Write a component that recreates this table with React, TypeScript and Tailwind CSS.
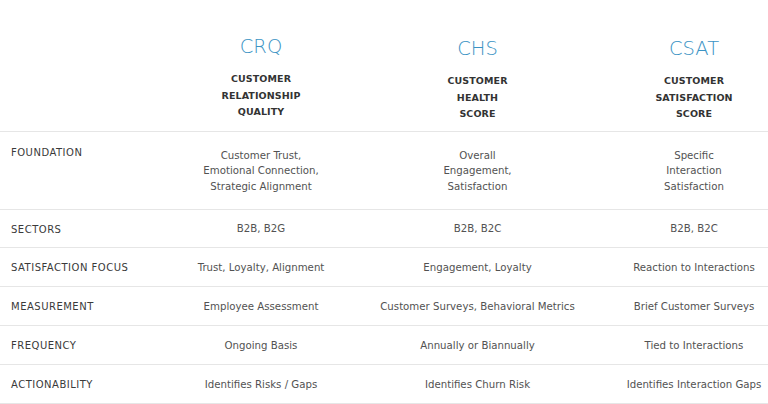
import React from 'react';

type Row = {
  label: string;
  cells: string[][];
  tall?: boolean;
  h: string;
};

const metrics = [
  { code: 'CRQ', pt: 'pt-[35px]', name: ['CUSTOMER', 'RELATIONSHIP', 'QUALITY'] },
  { code: 'CHS', pt: 'pt-[37px]', name: ['CUSTOMER', 'HEALTH', 'SCORE'] },
  { code: 'CSAT', pt: 'pt-[37px]', name: ['CUSTOMER', 'SATISFACTION', 'SCORE'] },
];

const rows: Row[] = [
  {
    label: 'FOUNDATION',
    tall: true,
    h: 'h-[78px]',
    cells: [
      ['Customer Trust,', 'Emotional Connection,', 'Strategic Alignment'],
      ['Overall', 'Engagement,', 'Satisfaction'],
      ['Specific', 'Interaction', 'Satisfaction'],
    ],
  },
  { label: 'SECTORS', h: 'h-[38px]', cells: [['B2B, B2G'], ['B2B, B2C'], ['B2B, B2C']] },
  {
    label: 'SATISFACTION FOCUS',
    h: 'h-[39px]',
    cells: [['Trust, Loyalty, Alignment'], ['Engagement, Loyalty'], ['Reaction to Interactions']],
  },
  {
    label: 'MEASUREMENT',
    h: 'h-[39px]',
    cells: [['Employee Assessment'], ['Customer Surveys, Behavioral Metrics'], ['Brief Customer Surveys']],
  },
  {
    label: 'FREQUENCY',
    h: 'h-[39px]',
    cells: [['Ongoing Basis'], ['Annually or Biannually'], ['Tied to Interactions']],
  },
  {
    label: 'ACTIONABILITY',
    h: 'h-[39px]',
    cells: [['Identifies Risks / Gaps'], ['Identifies Churn Risk'], ['Identifies Interaction Gaps']],
  },
];

const App: React.FC = () => {
  return (
    <div className="w-full h-[404px] overflow-hidden bg-white font-['DejaVu_Sans',sans-serif]">
      <div className="w-[802px]">
        {/* Header */}
        <div className="grid grid-cols-[153px_216px_217px_216px] h-[132px] border-b border-[#e6e6e6]">
          <div />
          {metrics.map((m) => (
            <div key={m.code} className={`flex flex-col items-center ${m.pt}`}>
              <div className="text-[19.5px] leading-[24px] font-light text-[#3b93c4]">{m.code}</div>
              <div className="mt-[12px] flex flex-col items-center text-[9.5px] leading-[16.5px] font-bold tracking-[0.01em] text-[#333]">
                {m.name.map((n) => (
                  <span key={n}>{n}</span>
                ))}
              </div>
            </div>
          ))}
        </div>

        {/* Body */}
        {rows.map((r) => (
          <div
            key={r.label}
            className={`grid grid-cols-[153px_216px_217px_216px] border-b border-[#e6e6e6] ${r.h}`}
          >
            <div
              className={`pl-[11px] text-[10px] tracking-[0.05em] text-[#3a3a3a] ${
                r.tall ? 'pt-[13px] leading-[16px]' : 'flex items-center pt-px'
              }`}
            >
              {r.label}
            </div>
            {r.cells.map((c, i) => (
              <div
                key={i}
                className="flex flex-col items-center justify-center pt-px text-center text-[10.2px] leading-[15.5px] text-[#525252]"
              >
                {c.map((line) => (
                  <span key={line}>{line}</span>
                ))}
              </div>
            ))}
          </div>
        ))}
      </div>
    </div>
  );
};

export default App;
